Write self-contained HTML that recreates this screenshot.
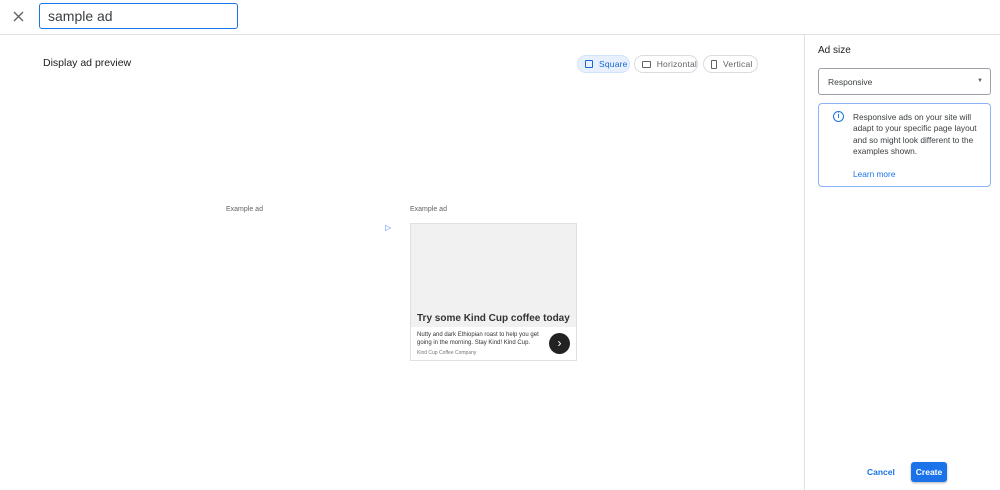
<!DOCTYPE html>
<html><head><style>
*{box-sizing:border-box;margin:0;padding:0}
body{width:1000px;height:490px;position:relative;background:#fff;font-family:"Liberation Sans",sans-serif;color:#202124;overflow:hidden}
.a{position:absolute}
.chip{position:absolute;top:55px;height:18px;border:1px solid #dadce0;border-radius:10px;font-size:8.5px;color:#5f6368;display:flex;align-items:center;padding-left:7px;letter-spacing:.2px}
.chip i{display:inline-block;border:1.3px solid #5f6368;border-radius:1px;margin-right:6px}
</style></head><body>
<svg class="a" style="left:13px;top:11px" width="11" height="11" viewBox="0 0 11 11"><path d="M1 1L10 10M10 1L1 10" stroke="#5f6368" stroke-width="1.4"/></svg>
<div class="a" style="left:39px;top:3px;width:199px;height:26px;border:1.5px solid #1a73e8;border-radius:3px;font-size:14px;padding:4px 8px;color:#3c4043">sample ad</div>
<div class="a" style="left:0;top:34px;width:1000px;height:1px;background:#e0e0e0"></div>
<div class="a" style="left:804px;top:34px;width:1px;height:456px;background:#e0e0e0"></div>
<div class="a" style="left:43px;top:57px;font-size:10.5px">Display ad preview</div>
<div class="chip" style="left:577px;width:53px;background:#e8f0fe;border-color:#d2e3fc;color:#1967d2"><i style="width:8px;height:8px;border-color:#1967d2"></i>Square</div>
<div class="chip" style="left:634px;width:64px"><i style="width:9px;height:7px"></i>Horizontal</div>
<div class="chip" style="left:703px;width:55px"><i style="width:6px;height:9px"></i>Vertical</div>
<div class="a" style="left:226px;top:206px;font-size:7px;color:#5f6368">Example ad</div>
<div class="a" style="left:410px;top:206px;font-size:7px;color:#5f6368">Example ad</div>
<div class="a" style="left:385px;top:223px;font-size:8px;color:#4285f4">▷</div>
<div class="a" style="left:410px;top:223px;width:167px;height:138px;border:1px solid #e0e0e0;background:#fff">
<div style="height:103px;background:#f1f1f1;position:relative"><div style="position:absolute;left:6px;top:89px;font-size:10px;font-weight:bold;color:#333">Try some Kind Cup coffee today</div></div>
<div style="position:absolute;left:6px;top:107px;font-size:6px;line-height:8px;color:#333">Nutty and dark Ethiopian roast to help you get<br>going in the morning. Stay Kind! Kind Cup.</div>
<div style="position:absolute;left:6px;top:126px;font-size:5px;color:#777">Kind Cup Coffee Company</div>
<div style="position:absolute;left:138px;top:109px;width:21px;height:21px;border-radius:50%;background:#222;color:#fff;font-size:12px;text-align:center;line-height:20px">›</div>
</div>
<div class="a" style="left:818px;top:45px;font-size:10px">Ad size</div>
<div class="a" style="left:818px;top:68px;width:173px;height:27px;border:1px solid #9aa0a6;border-radius:3px;font-size:8.5px;color:#3c4043;padding:8px 9px">Responsive<span style="position:absolute;right:7px;top:9px;font-size:6px;color:#5f6368">▼</span></div>
<div class="a" style="left:818px;top:103px;width:173px;height:84px;border:1px solid #8ab4f8;border-radius:4px">
<div style="position:absolute;left:14px;top:7px;width:11px;height:11px;border:1.3px solid #1a73e8;border-radius:50%;font-size:7px;color:#1a73e8;text-align:center;line-height:9px;font-weight:bold">i</div>
<div style="position:absolute;left:34px;top:8px;font-size:8.3px;line-height:11.3px;color:#3c4043">Responsive ads on your site will<br>adapt to your specific page layout<br>and so might look different to the<br>examples shown.</div>
<div style="position:absolute;left:34px;top:65px;font-size:8.3px;color:#1a73e8">Learn more</div>
</div>
<div class="a" style="left:867px;top:467px;font-size:8.5px;color:#1a73e8;font-weight:bold">Cancel</div>
<div class="a" style="left:911px;top:462px;width:36px;height:20px;background:#1a73e8;border-radius:3px;color:#fff;font-size:8.5px;font-weight:bold;text-align:center;line-height:20px;box-shadow:0 1px 2px rgba(0,0,0,.3)">Create</div>
</body></html>
